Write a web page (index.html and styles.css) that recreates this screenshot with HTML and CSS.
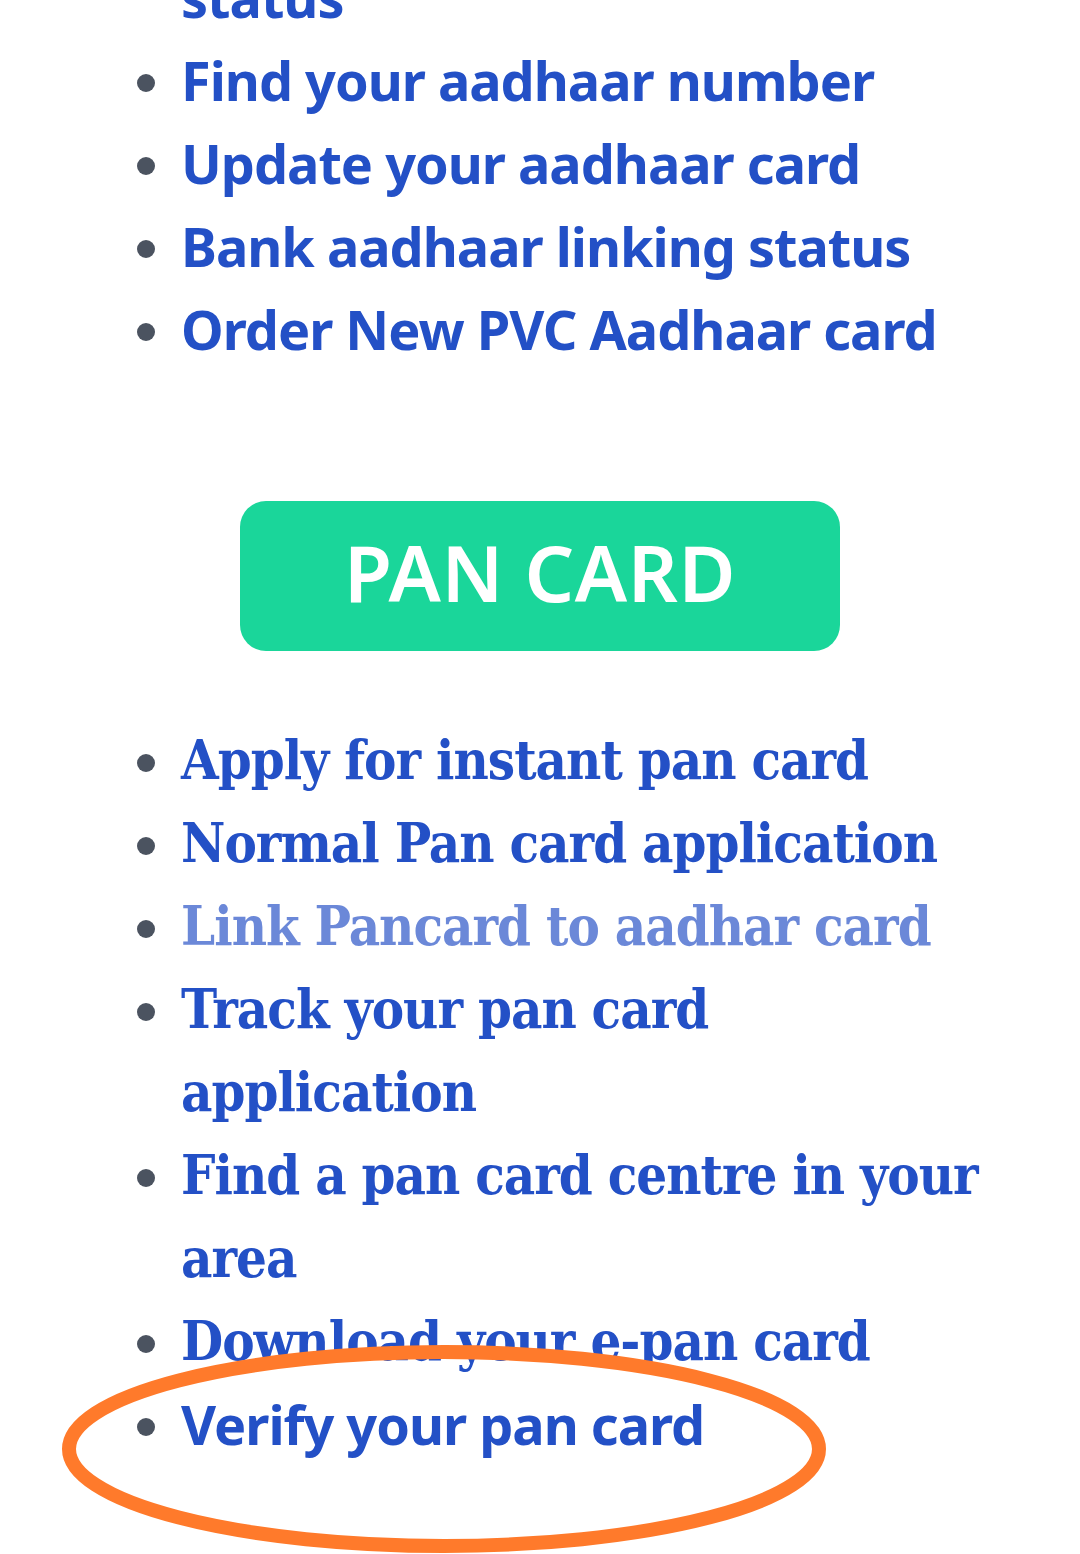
FILE: index.html
```html
<!DOCTYPE html>
<html lang="en">
<head>
<meta charset="utf-8">
<title>Aadhaar and PAN services</title>
<link rel="stylesheet" href="styles.css">
</head>
<body>
<main class="page">
  <ul class="links links-sans">
    <li class="cont"><a href="#">status</a></li>
    <li><a href="#">Find your aadhaar number</a></li>
    <li><a href="#">Update your aadhaar card</a></li>
    <li><a href="#">Bank aadhaar linking status</a></li>
    <li><a href="#">Order New PVC Aadhaar card</a></li>
  </ul>

  <div class="banner-wrap">
    <div class="banner">PAN CARD</div>
  </div>

  <ul class="links links-serif">
    <li><a href="#">Apply for instant pan card</a></li>
    <li><a href="#">Normal Pan card application</a></li>
    <li><a href="#" class="visited">Link Pancard to aadhar card</a></li>
    <li><a href="#">Track your pan card application</a></li>
    <li><a href="#">Find a pan card centre in your area</a></li>
    <li><a href="#">Download your e-pan card</a></li>
    <li><a href="#" class="sans-item">Verify your pan card</a></li>
  </ul>

  <svg class="circle-mark" width="800" height="230" viewBox="0 0 800 230" aria-hidden="true">
    <ellipse cx="400" cy="113" rx="375" ry="97" fill="none" stroke="#ff7a2b" stroke-width="14"/>
  </svg>
</main>
</body>
</html>
```

FILE: styles.css
```css
html, body {
  margin: 0;
  padding: 0;
  background: #ffffff;
}

body {
  width: 1080px;
  height: 1554px;
  overflow: hidden;
}

.page {
  position: relative;
  display: flow-root;
  height: 1554px;
}

.links {
  list-style: none;
  margin: 0;
  padding: 0 0 0 137px;
  width: 864px;
  line-height: 83px;
}

.links li {
  display: flex;
  align-items: flex-start;
}

.links li::before {
  content: "";
  flex: none;
  width: 18px;
  height: 18px;
  border-radius: 50%;
  background: #4b5360;
  margin-top: 35px;
  margin-right: 26px;
}

.links li.cont::before {
  visibility: hidden;
}

.links a {
  color: #2350c6;
  text-decoration: none;
  font-weight: 700;
}

.links-sans {
  font-family: "Noto Sans", "Open Sans", sans-serif;
  font-size: 54px;
  letter-spacing: -1px;
  margin-top: -44px;
}

.banner-wrap {
  display: flex;
  justify-content: center;
  padding-top: 130px;
}

.banner {
  box-sizing: border-box;
  width: 600px;
  height: 150px;
  padding-bottom: 8px;
  border-radius: 26px;
  background: #1ad69a;
  color: #ffffff;
  font-family: "Noto Sans", "Open Sans", sans-serif;
  font-weight: 600;
  font-size: 78px;
  display: flex;
  align-items: center;
  justify-content: center;
  letter-spacing: 0.5px;
  line-height: 1;
}

.links-serif {
  font-family: "DejaVu Serif Condensed", "DejaVu Serif", serif;
  font-stretch: condensed;
  font-size: 54px;
  letter-spacing: -1px;
  margin-top: 68px;
}

.links-serif a.visited {
  color: #6b88d8;
}

.links-serif a.sans-item {
  font-family: "Noto Sans", "Open Sans", sans-serif;
  font-stretch: normal;
}

.circle-mark {
  position: absolute;
  left: 44px;
  top: 1336px;
}
```
